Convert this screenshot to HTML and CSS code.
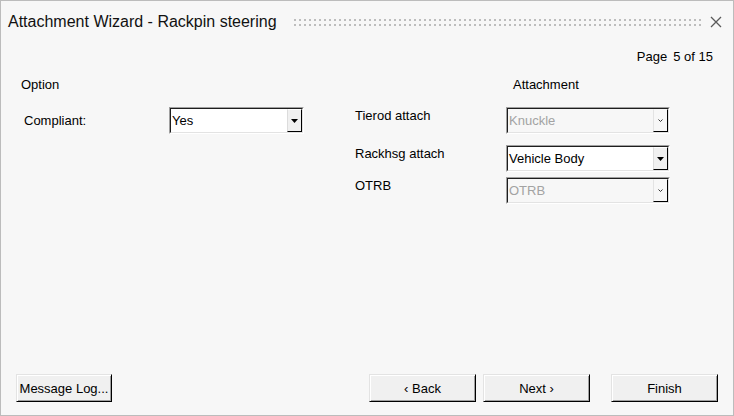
FILE: index.html
```html
<!DOCTYPE html>
<html>
<head>
<meta charset="utf-8">
<title>Attachment Wizard</title>
<link rel="stylesheet" href="styles.css">
</head>
<body>
<div class="window">
  <div class="titlebar">
    <span class="title">Attachment Wizard - Rackpin steering</span>
    <span class="grip"></span>
    <span class="close">
      <svg width="12" height="12" viewBox="0 0 12 12"><path d="M1 1 L11 11 M11 1 L1 11" stroke="#5a5a5a" stroke-width="1.3" fill="none"/></svg>
    </span>
  </div>
  <div class="pager"><span>Page</span><span>5 of 15</span></div>
  <div class="form">
    <div class="col left">
      <div class="head">Option</div>
      <div class="row first">
        <span class="label compliant">Compliant:</span>
        <div class="combo small">
          <div class="combo-in">
            <span class="field">Yes</span>
            <span class="btn"><svg width="7" height="4" viewBox="0 0 7 4"><path d="M0 0 H7 L3.5 4 Z" fill="#000"/></svg></span>
          </div>
        </div>
      </div>
    </div>
    <div class="col right">
      <div class="head att">Attachment</div>
      <div class="row first">
        <span class="label">Tierod attach</span>
        <div class="combo wide disabled">
          <div class="combo-in">
            <span class="field">Knuckle</span>
            <span class="btn"><svg width="5" height="3" viewBox="0 0 5 3"><path d="M0.5 0.5 L2.5 2.5 L4.5 0.5" stroke="#333" stroke-width="1" fill="none"/></svg></span>
          </div>
        </div>
      </div>
      <div class="row second">
        <span class="label">Rackhsg attach</span>
        <div class="combo wide">
          <div class="combo-in">
            <span class="field">Vehicle Body</span>
            <span class="btn"><svg width="7" height="4" viewBox="0 0 7 4"><path d="M0 0 H7 L3.5 4 Z" fill="#000"/></svg></span>
          </div>
        </div>
      </div>
      <div class="row third">
        <span class="label">OTRB</span>
        <div class="combo wide disabled">
          <div class="combo-in">
            <span class="field">OTRB</span>
            <span class="btn"><svg width="5" height="3" viewBox="0 0 5 3"><path d="M0.5 0.5 L2.5 2.5 L4.5 0.5" stroke="#333" stroke-width="1" fill="none"/></svg></span>
          </div>
        </div>
      </div>
    </div>
  </div>
  <div class="footer">
    <button class="button log">Message Log...</button>
    <span class="spacer"></span>
    <button class="button">&lsaquo; Back</button>
    <button class="button next">Next &rsaquo;</button>
    <button class="button finish">Finish</button>
  </div>
</div>
</body>
</html>
```
FILE: styles.css
```css
html, body {
  margin: 0;
  padding: 0;
  background: #f7f7f7;
}
.window {
  width: 734px;
  height: 416px;
  box-sizing: border-box;
  border: 1px solid #bcbcbc;
  background: #f7f7f7;
  display: flex;
  flex-direction: column;
  font-family: "Liberation Sans", Arial, sans-serif;
  font-size: 13px;
  color: #000;
}
.titlebar {
  height: 42px;
  display: flex;
  align-items: center;
  padding-left: 7px;
}
.title {
  font-size: 16px;
  line-height: 18px;
  color: #111;
  white-space: nowrap;
}
.grip {
  flex: 1;
  height: 7px;
  margin-left: 17px;
  margin-right: 9px;
  background:
    linear-gradient(90deg, #bdbdbd 0 2px, transparent 2px) 0 0 / 5px 2px repeat-x,
    linear-gradient(90deg, #bdbdbd 0 2px, transparent 2px) 0 5px / 5px 2px repeat-x;
}
.close {
  width: 12px;
  height: 12px;
  margin-right: 11px;
  display: flex;
}
.pager {
  margin-top: 6px;
  line-height: 16px;
  display: flex;
  justify-content: flex-end;
  gap: 6px;
  padding-right: 20px;
}
.form {
  margin-top: 12px;
  display: grid;
  grid-template-columns: 334px 1fr;
  padding-left: 20px;
}
.col {
  display: flex;
  flex-direction: column;
}
.head {
  line-height: 16px;
}
.head.att {
  padding-left: 158px;
}
.row {
  display: flex;
  align-items: center;
}
.row.first { margin-top: 14px; }
.row.second { margin-top: 11px; }
.row.third { margin-top: 5px; }
.label {
  line-height: 16px;
  white-space: nowrap;
}
.left .label {
  width: 145px;
  padding-left: 3px;
}
.right .label {
  width: 151px;
  align-self: flex-start;
  padding-top: 1px;
}
.combo {
  height: 27px;
  box-sizing: border-box;
  border: 1px solid;
  border-color: #a0a0a0 #ffffff #ffffff #a0a0a0;
  display: flex;
}
.combo.small { width: 135px; }
.combo.wide { width: 164px; }
.combo-in {
  flex: 1;
  display: flex;
  border: 1px solid;
  border-color: #1e1e1e #e3e3e3 #e3e3e3 #1e1e1e;
  background: #fff;
}
.field {
  flex: 1;
  padding-left: 1px;
  display: flex;
  align-items: center;
  white-space: nowrap;
  overflow: hidden;
}
.btn {
  width: 15px;
  box-sizing: border-box;
  border: 1px solid;
  border-color: #ffffff #000000 #000000 #dcdcdc;
  background: #f0f0f0;
  display: flex;
  align-items: center;
  justify-content: center;
}
.disabled .combo-in {
  background: #f7f7f7;
}
.disabled .field {
  color: #a3a3a3;
}
.disabled .btn {
  background: #f7f7f7;
  border-color: #f7f7f7 #000000 #000000 #e3e3e3;
}
.footer {
  margin-top: auto;
  display: flex;
  padding: 0 15px 13px 15px;
}
.spacer { flex: 1; }
.button {
  height: 28px;
  width: 107px;
  box-sizing: border-box;
  margin: 0;
  padding: 0;
  font-family: "Liberation Sans", Arial, sans-serif;
  font-size: 13px;
  color: #000;
  background: #f0f0f0;
  border: 1px solid;
  border-color: #e3e3e3 #000000 #000000 #e3e3e3;
  box-shadow: inset 1px 1px #ffffff, inset -1px -1px #a0a0a0;
  border-radius: 0;
}
.button.log { width: 96px; }
.button.next { margin-left: 7px; }
.button.finish { margin-left: 21px; }
```
